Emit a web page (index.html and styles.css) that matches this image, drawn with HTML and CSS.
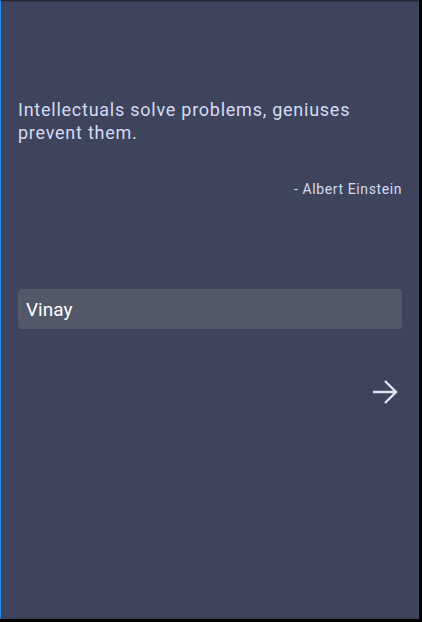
FILE: index.html
```html
<!DOCTYPE html>
<html lang="en">
<head>
    <meta charset="utf-8">
    <title>Quote</title>
    <link rel="stylesheet" href="styles.css">
</head>
<body>
    <div class="screen">
        <div class="quote-container">
            <p class="quote-text">Intellectuals solve problems, geniuses prevent them.</p>
            <p class="quote-author">- Albert Einstein</p>
        </div>

        <input type="text" class="name-input" value="Vinay">

        <div class="next-row">
            <button class="next-btn" aria-label="Next">
                <svg width="28" height="28" viewBox="0 0 28 28">
                    <path d="M2 14H25M14 3L25 14L14 25" fill="none" stroke="#e2e3ec" stroke-width="2.4"/>
                </svg>
            </button>
        </div>
    </div>
</body>
</html>
```

FILE: styles.css
```css
body {
    margin: 0;
    background-color: #000;
    font-family: Roboto, "Noto Sans", sans-serif;
}
.screen {
    width: 419px;
    height: 619px;
    border-left: 1px solid #1e8cf5;
    border-top: 1px solid #23262f;
    border-bottom: 1px solid #373d52;
    background-color: #3d445c;
    box-shadow: inset 0 1px 0 #343a4f;
    padding: 98px 17px 0 17px;
    box-sizing: border-box;
}
.quote-container {
    color: #d6daf4;
}
.quote-text {
    margin: 0;
    font-size: 18px;
    line-height: 22.5px;
    letter-spacing: 0.75px;
}
.quote-author {
    margin: 37px 0 0 0;
    font-size: 14px;
    line-height: 17px;
    letter-spacing: 0.6px;
    text-align: right;
}
.name-input {
    display: block;
    width: 100%;
    height: 40px;
    margin-top: 91px;
    padding: 0 8px;
    box-sizing: border-box;
    border: none;
    border-radius: 4px;
    background-color: #525868;
    color: #ffffff;
    font-family: Roboto, "Noto Sans", sans-serif;
    font-size: 19px;
    outline: none;
}
.next-row {
    display: flex;
    justify-content: flex-end;
    margin-top: 49px;
    margin-right: 3px;
}
.next-btn {
    background: none;
    border: none;
    padding: 0;
    width: 28px;
    height: 28px;
    cursor: pointer;
}
.next-btn svg {
    display: block;
}
```
